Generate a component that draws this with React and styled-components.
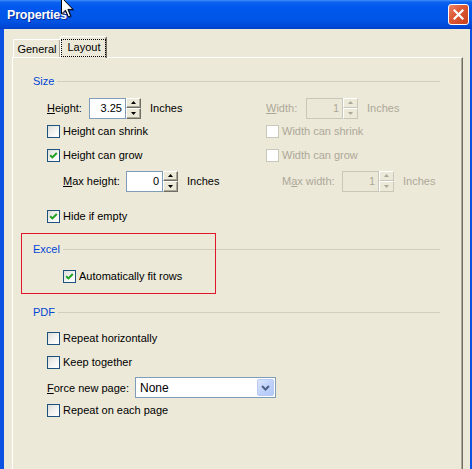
import React from 'react';
import styled, { createGlobalStyle } from 'styled-components';

const GlobalStyle = createGlobalStyle`
  html, body {
    margin: 0;
    padding: 0;
    background: #ece9d8;
  }
  body {
    font-family: "Liberation Sans", Arial, sans-serif;
    font-size: 11px;
    color: #000;
  }
`;

const Window = styled.div`
  position: relative;
  width: 472px;
  height: 469px;
  overflow: hidden;
  display: flex;
  flex-direction: column;
  background: #0b52e2;
`;

const TitleBar = styled.div`
  flex: none;
  height: 29px;
  display: flex;
  align-items: center;
  justify-content: space-between;
  padding: 0 3px 0 7px;
  background: linear-gradient(
    to bottom,
    #3d8ef8 0%,
    #0b61ef 8%,
    #0058ee 25%,
    #0055e6 70%,
    #0049d8 90%,
    #003fc8 100%
  );
`;

const Title = styled.div`
  color: #fff;
  font-weight: bold;
  font-size: 12.5px;
  letter-spacing: -0.2px;
  text-shadow: 1px 1px 0 #0a2a9a;
`;

const CloseButton = styled.div`
  width: 21px;
  height: 21px;
  box-sizing: border-box;
  border: 1px solid #fff;
  border-radius: 3px;
  background: linear-gradient(135deg, #e9846a 0%, #dd5a36 40%, #c8401c 100%);
  display: flex;
  align-items: center;
  justify-content: center;
`;

const Frame = styled.div`
  flex: 1;
  min-height: 0;
  display: flex;
  padding: 0 2px 0 4px;
`;

const Client = styled.div`
  flex: 1;
  display: flex;
  flex-direction: column;
  background: #ece9d8;
  padding: 7px 7px 0 8px;
`;

const TabStrip = styled.div`
  display: flex;
  align-items: flex-end;
  height: 21px;
  padding-left: 1px;
`;

const Tab = styled.div`
  position: relative;
  box-sizing: border-box;
  display: flex;
  align-items: center;
  justify-content: center;
  width: ${p => (p.$active ? 47 : 48)}px;
  height: ${p => (p.$active ? 22 : 18)}px;
  margin-left: ${p => (p.$active ? -1 : 0)}px;
  margin-bottom: ${p => (p.$active ? -1 : 0)}px;
  z-index: ${p => (p.$active ? 2 : 1)};
  background: #ece9d8;
  border-top: 1px solid #fff;
  border-left: 1px solid #fff;
  border-right: 1px solid #716f64;
  border-radius: 2px 2px 0 0;
  box-shadow: inset -1px 0 0 #aca899;
`;

const FocusRing = styled.span`
  display: block;
  padding: 1px 4px 2px 5px;
  line-height: 13px;
  border: 1px dotted #000;
`;

const Panel = styled.div`
  flex: 1;
  box-sizing: border-box;
  min-height: 420px;
  background: #ece9d8;
  border-top: 1px solid #fff;
  border-left: 1px solid #fff;
  border-right: 1px solid #716f64;
  box-shadow: inset -1px 0 0 #aca899;
  padding: 16px 22px 0 20px;
`;

const GroupHeader = styled.div`
  display: flex;
  align-items: center;
  height: 14px;
  margin-top: ${p => p.$mt || 0}px;
  color: #0046d5;

  &::after {
    content: '';
    flex: 1;
    margin-left: 3px;
    border-top: 1px solid #d0d0bf;
  }
`;

const GroupBody = styled.div`
  padding-left: 14px;
`;

const Row = styled.div`
  display: grid;
  grid-template-columns: ${p => (p.$split ? '219px 1fr' : '1fr')};
  align-items: center;
  height: ${p => p.$h}px;
  margin-top: ${p => p.$mt}px;
`;

const Cell = styled.div`
  display: flex;
  align-items: center;
  padding-left: ${p => p.$indent || 0}px;
  color: ${p => (p.$disabled ? '#aca899' : '#000')};
  white-space: nowrap;
`;

const FieldLabel = styled.span`
  width: ${p => p.$w}px;
  flex: none;
`;

const Box = styled.span`
  flex: none;
  box-sizing: border-box;
  width: 13px;
  height: 13px;
  margin-right: 3px;
  display: flex;
  align-items: center;
  justify-content: center;
  border: 1px solid ${p => (p.$disabled ? '#cac8bb' : '#1c5180')};
  background: ${p =>
    p.$disabled ? '#fff' : 'linear-gradient(135deg, #dcdcd7 0%, #f6f6f4 60%, #fff 100%)'};
`;

const Input = styled.div`
  box-sizing: border-box;
  width: 37px;
  height: 21px;
  padding-right: 3px;
  display: flex;
  align-items: center;
  justify-content: flex-end;
  border: 1px solid ${p => (p.$disabled ? '#c9c7ba' : '#7f9db9')};
  background: ${p => (p.$disabled ? '#ebe8d7' : '#fff')};
  color: ${p => (p.$disabled ? '#aca899' : '#000')};
`;

const Spin = styled.div`
  display: flex;
  flex-direction: column;
  width: 15px;
  height: 21px;
`;

const SpinButton = styled.div`
  flex: 1;
  box-sizing: border-box;
  display: flex;
  align-items: center;
  justify-content: center;
  background: #ece9d8;
  border: 1px solid;
  border-color: ${p => (p.$disabled ? '#fff #c9c7ba #c9c7ba #fff' : '#fff #716f64 #716f64 #fff')};
  box-shadow: ${p => (p.$disabled ? 'none' : 'inset -1px -1px 0 #aca899')};
`;

const Unit = styled.span`
  margin-left: 9px;
`;

const Select = styled.div`
  box-sizing: border-box;
  width: 141px;
  height: 21px;
  padding: 1px 1px 1px 4px;
  display: flex;
  align-items: center;
  justify-content: space-between;
  border: 1px solid #7f9db9;
  background: #fff;
  font-size: 12px;
`;

const DropButton = styled.div`
  box-sizing: border-box;
  width: 17px;
  height: 17px;
  display: flex;
  align-items: center;
  justify-content: center;
  border: 1px solid #b9cbf3;
  border-radius: 2px;
  background: linear-gradient(135deg, #dce6fd 0%, #c1d3fb 50%, #b1c7f6 100%);
`;

const Annotation = styled.div`
  position: absolute;
  left: 21px;
  top: 233px;
  width: 195px;
  height: 61px;
  box-sizing: border-box;
  border: 1px solid #e0162b;
  pointer-events: none;
`;

const Cursor = styled.svg`
  position: absolute;
  left: 61px;
  top: -3px;
  filter: drop-shadow(1px 1px 0 rgba(0, 0, 0, 0.35));
`;

const Check = ({ checked, disabled, children }) => (
  <>
    <Box $disabled={disabled}>
      {checked && (
        <svg width="9" height="9" viewBox="0 0 9 9">
          <polyline points="1.2,4.2 3.4,6.4 7.8,2" fill="none" stroke="#21a121" strokeWidth="2" />
        </svg>
      )}
    </Box>
    <span>{children}</span>
  </>
);

const Arrow = ({ up, disabled }) => (
  <svg width="5" height="3" viewBox="0 0 5 3">
    <polygon points={up ? '0,3 5,3 2.5,0' : '0,0 5,0 2.5,3'} fill={disabled ? '#aca899' : '#000'} />
  </svg>
);

const SpinBox = ({ value, disabled }) => (
  <>
    <Input $disabled={disabled}>{value}</Input>
    <Spin>
      <SpinButton $disabled={disabled}>
        <Arrow up disabled={disabled} />
      </SpinButton>
      <SpinButton $disabled={disabled}>
        <Arrow disabled={disabled} />
      </SpinButton>
    </Spin>
    <Unit>Inches</Unit>
  </>
);

export default function App() {
  return (
    <>
      <GlobalStyle />
      <Window>
        <TitleBar>
          <Title>Properties</Title>
          <CloseButton>
            <svg width="11" height="11" viewBox="0 0 11 11">
              <path d="M1.5 1.5 L9.5 9.5 M9.5 1.5 L1.5 9.5" stroke="#fff" strokeWidth="2.2" strokeLinecap="square" />
            </svg>
          </CloseButton>
        </TitleBar>
        <Frame>
          <Client>
            <TabStrip>
              <Tab>General</Tab>
              <Tab $active>
                <FocusRing>Layout</FocusRing>
              </Tab>
            </TabStrip>
            <Panel>
              <GroupHeader>Size</GroupHeader>
              <GroupBody>
                <Row $split $h={22} $mt={9}>
                  <Cell>
                    <FieldLabel $w={42}><u>H</u>eight:</FieldLabel>
                    <SpinBox value="3.25" />
                  </Cell>
                  <Cell $disabled>
                    <FieldLabel $w={40}><u>W</u>idth:</FieldLabel>
                    <SpinBox value="1" disabled />
                  </Cell>
                </Row>
                <Row $split $h={16} $mt={4}>
                  <Cell><Check>Height can shrink</Check></Cell>
                  <Cell $disabled><Check disabled>Width can shrink</Check></Cell>
                </Row>
                <Row $split $h={16} $mt={8}>
                  <Cell><Check checked>Height can grow</Check></Cell>
                  <Cell $disabled><Check disabled>Width can grow</Check></Cell>
                </Row>
                <Row $split $h={22} $mt={7}>
                  <Cell $indent={16}>
                    <FieldLabel $w={63}><u>M</u>ax height:</FieldLabel>
                    <SpinBox value="0" />
                  </Cell>
                  <Cell $indent={16} $disabled>
                    <FieldLabel $w={60}>M<u>a</u>x width:</FieldLabel>
                    <SpinBox value="1" disabled />
                  </Cell>
                </Row>
                <Row $h={16} $mt={16}>
                  <Cell><Check checked>Hide if empty</Check></Cell>
                </Row>
              </GroupBody>

              <GroupHeader $mt={18}>Excel</GroupHeader>
              <GroupBody>
                <Row $h={16} $mt={12}>
                  <Cell $indent={16}><Check checked>Automatically fit rows</Check></Cell>
                </Row>
              </GroupBody>

              <GroupHeader $mt={21}>PDF</GroupHeader>
              <GroupBody>
                <Row $h={16} $mt={11}>
                  <Cell><Check>Repeat horizontally</Check></Cell>
                </Row>
                <Row $h={16} $mt={8}>
                  <Cell><Check>Keep together</Check></Cell>
                </Row>
                <Row $h={21} $mt={7}>
                  <Cell>
                    <FieldLabel $w={88}><u>F</u>orce new page:</FieldLabel>
                    <Select>
                      <span>None</span>
                      <DropButton>
                        <svg width="9" height="6" viewBox="0 0 9 6">
                          <polyline points="1,1 4.5,4.5 8,1" fill="none" stroke="#4d6185" strokeWidth="2" />
                        </svg>
                      </DropButton>
                    </Select>
                  </Cell>
                </Row>
                <Row $h={16} $mt={4}>
                  <Cell><Check>Repeat on each page</Check></Cell>
                </Row>
              </GroupBody>
            </Panel>
          </Client>
        </Frame>
        <Annotation />
        <Cursor width="14" height="22" viewBox="0 0 14 22">
          <path d="M0.5 0.5 V17 L4.5 13.2 L7.3 19.8 L9.6 18.8 L6.9 12.4 H12 Z" fill="#fff" stroke="#000" strokeWidth="1" strokeLinejoin="miter" />
        </Cursor>
      </Window>
    </>
  );
}
